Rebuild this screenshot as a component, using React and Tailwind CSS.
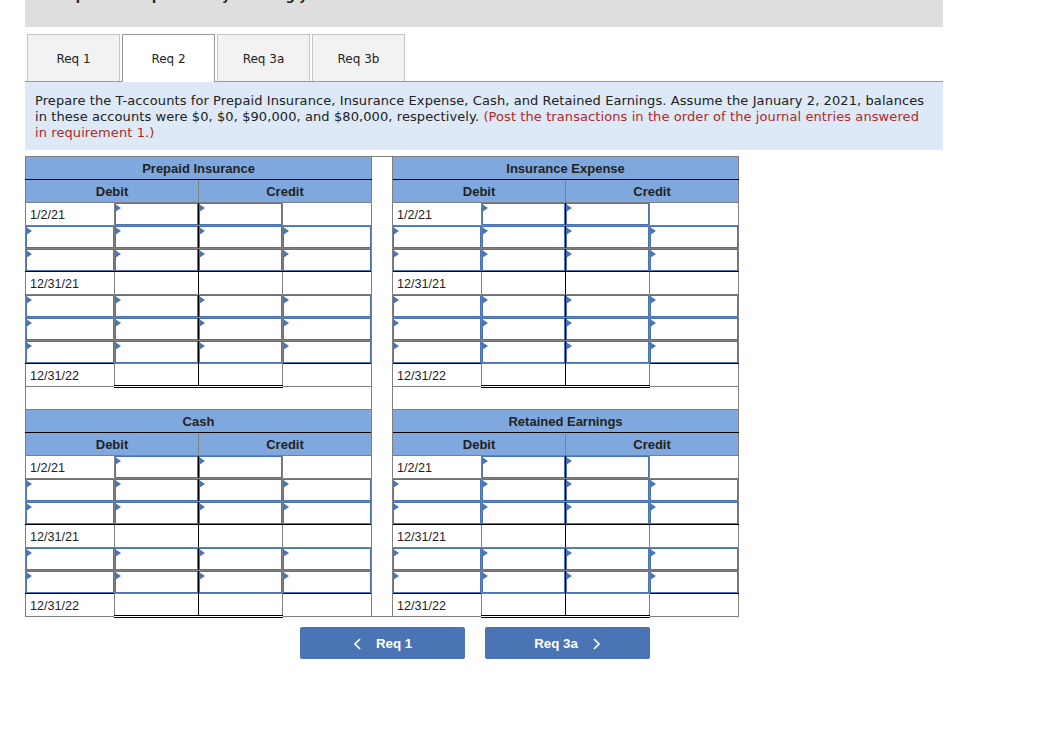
const tabs = ["Req 1", "Req 2", "Req 3a", "Req 3b"];

const sansFont = "font-['Liberation_Sans',Arial,sans-serif]";
const gray = "border-[#7f7f7f]";

// "date" rows have a label and plain cells, "input" rows are all entry boxes
const firstRows = [
  { label: "1/2/21", inputs: [false, true, true, false] },
  { inputs: [true, true, true, true] },
  { inputs: [true, true, true, true], blackBottom: true },
  { label: "12/31/21", inputs: [false, false, false, false] },
  { inputs: [true, true, true, true] },
  { inputs: [true, true, true, true] },
  { inputs: [true, true, true, true], blackBottom: true },
  { label: "12/31/22", inputs: [false, false, false, false], closing: true },
];

const secondRows = [
  { label: "1/2/21", inputs: [false, true, true, false] },
  { inputs: [true, true, true, true] },
  { inputs: [true, true, true, true], blackBottom: true },
  { label: "12/31/21", inputs: [false, false, false, false] },
  { inputs: [true, true, true, true] },
  { inputs: [true, true, true, true], blackBottom: true },
  { label: "12/31/22", inputs: [false, false, false, false], closing: true },
];

function EntryBox() {
  return (
    <div className="relative h-[22px] w-full">
      <input
        type="text"
        className="block h-full w-full border border-[#4a74b4] bg-white outline-none"
      />
      <svg className="absolute left-0 top-[1px]" width="6" height="8" viewBox="0 0 6 8">
        <path d="M0 0 L6 4 L0 8 Z" fill="#4a74b4" />
      </svg>
    </div>
  );
}

function AccountCells({ row }) {
  return row.inputs.map((isInput, col) => {
    const bottom = row.blackBottom ? "border-b-black" : "";
    const middle = col === 1 ? "border-r-black" : "";
    const closing = row.closing && (col === 1 || col === 2) ? "border-b-[3px] border-b-black border-double" : "";
    return (
      <td key={col} className={`h-[23px] border p-0 text-[12.6px] text-[#222] ${gray} ${bottom} ${middle} ${closing}`}>
        {isInput ? <EntryBox /> : col === 0 ? <div className="pl-1 pt-[2px]">{row.label}</div> : null}
      </td>
    );
  });
}

function HeaderRows({ left, right, gap }) {
  return (
    <>
      <tr>
        <td colSpan={4} className={`h-[23px] border border-b-black bg-[#7fa9de] p-0 pt-px text-center text-[13px] font-bold text-[#222] ${gray}`}>
          {left}
        </td>
        {gap}
        <td colSpan={4} className={`h-[23px] border border-b-black bg-[#7fa9de] p-0 pt-px text-center text-[13px] font-bold text-[#222] ${gray}`}>
          {right}
        </td>
      </tr>
      <tr>
        {["Debit", "Credit", "Debit", "Credit"].map((name, i) => (
          <td key={i} colSpan={2} className={`h-[23px] border border-t-black bg-[#7fa9de] p-0 pt-px text-center text-[13px] font-bold text-[#222] ${gray}`}>
            {name}
          </td>
        ))}
      </tr>
    </>
  );
}

export default function App() {
  return (
    <div className="min-h-[742px] w-[1052px] overflow-hidden bg-white pl-[25px]">
      {/* cut off instructions bar */}
      <div className="h-[27px] w-[918px] overflow-hidden bg-[#dedede] pl-5 font-['DejaVu_Sans',Verdana,sans-serif] text-[12.5px] font-bold leading-none text-[#222]">
        <p className="mt-[-10px]">Complete this question by entering your answers in the tabs below.</p>
      </div>

      {/* TABS */}
      <div className="ml-[2px] mt-[7px] flex gap-[2px] font-['DejaVu_Sans',Verdana,sans-serif] text-xs text-[#222]">
        {tabs.map((tab) => (
          <button
            key={tab}
            className={
              tab === "Req 2"
                ? "relative z-10 -mb-px h-[48px] w-[93px] border border-b-0 border-[#999] bg-white"
                : "h-[47px] w-[93px] border border-b-0 border-[#c4c4c4] bg-[#f2f2f2] pt-px"
            }
          >
            {tab}
          </button>
        ))}
      </div>

      {/* INSTRUCTIONS */}
      <div className="h-[69px] w-[918px] border-t border-[#999] bg-[#dde9f6] px-[10px] pt-[11px] font-['DejaVu_Sans',Verdana,sans-serif] text-[13px] leading-[16px] tracking-[0.09px] text-[#222]">
        Prepare the T-accounts for Prepaid Insurance, Insurance Expense, Cash, and Retained Earnings. Assume the January 2, 2021, balances
        in these accounts were $0, $0, $90,000, and $80,000, respectively.{" "}
        <span className="text-[#b02a2a]">(Post the transactions in the order of the journal entries answered in requirement 1.)</span>
      </div>

      {/* T-ACCOUNTS */}
      <table className={`mt-[6px] w-[714px] table-fixed border-collapse ${sansFont}`}>
        <colgroup>
          <col className="w-[89px]" />
          <col className="w-[84px]" />
          <col className="w-[84px]" />
          <col className="w-[89px]" />
          <col className="w-[21px]" />
          <col className="w-[89px]" />
          <col className="w-[84px]" />
          <col className="w-[84px]" />
          <col className="w-[89px]" />
        </colgroup>
        <tbody>
          <HeaderRows
            left="Prepaid Insurance"
            right="Insurance Expense"
            gap={<td rowSpan={20} className={`border bg-white p-0 ${gray}`} />}
          />
          {firstRows.map((row, i) => (
            <tr key={i}>
              <AccountCells row={row} />
              <AccountCells row={row} />
            </tr>
          ))}
          <tr>
            <td colSpan={4} className={`h-[23px] border p-0 ${gray}`} />
            <td colSpan={4} className={`h-[23px] border p-0 ${gray}`} />
          </tr>
          <HeaderRows left="Cash" right="Retained Earnings" />
          {secondRows.map((row, i) => (
            <tr key={i}>
              <AccountCells row={row} />
              <AccountCells row={row} />
            </tr>
          ))}
        </tbody>
      </table>

      {/* NAV BUTTONS */}
      <div className={`ml-[275px] mt-[9px] flex gap-5 text-[13.3px] font-bold text-white ${sansFont}`}>
        <button className="flex h-[32px] w-[165px] items-center justify-center gap-[15px] rounded-[2px] bg-[#4a74b4] pt-px">
          <svg width="8" height="12" viewBox="0 0 8 12" fill="none" stroke="currentColor" strokeWidth="1.7">
            <path d="M7 1 L2 6 L7 11" />
          </svg>
          Req 1
        </button>
        <button className="flex h-[32px] w-[165px] items-center justify-center gap-[15px] rounded-[2px] bg-[#4a74b4] pt-px">
          Req 3a
          <svg width="8" height="12" viewBox="0 0 8 12" fill="none" stroke="currentColor" strokeWidth="1.7">
            <path d="M1 1 L6 6 L1 11" />
          </svg>
        </button>
      </div>
    </div>
  );
}
